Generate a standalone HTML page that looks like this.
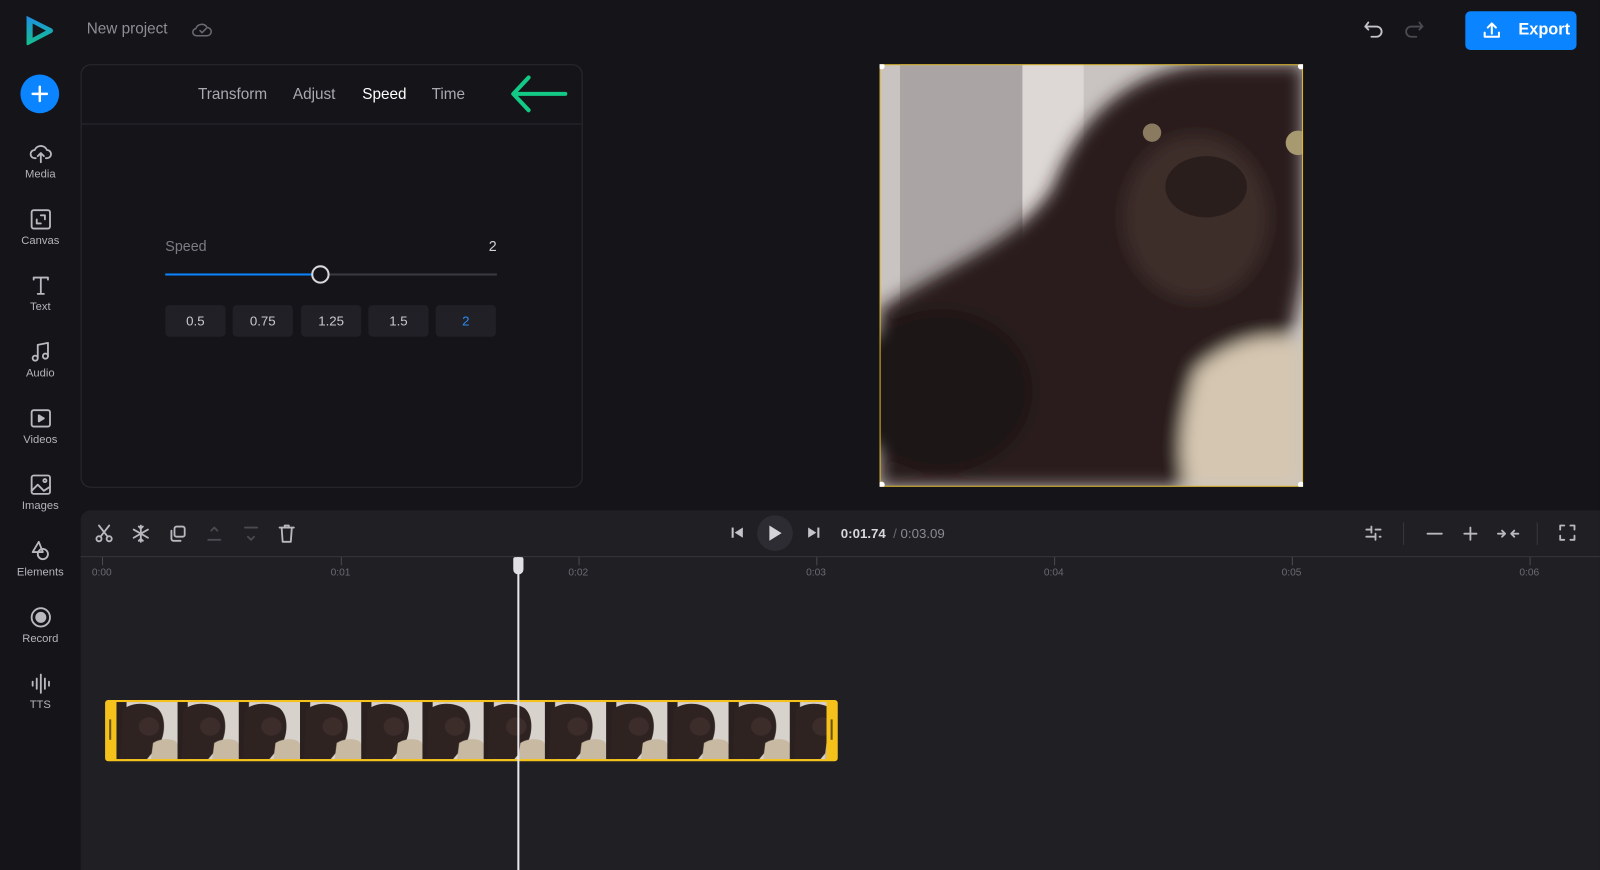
<!DOCTYPE html>
<html><head><meta charset="utf-8"><style>
*{box-sizing:border-box;margin:0;padding:0}
html,body{width:1600px;height:870px;overflow:hidden;background:#141419}
#w{position:absolute;left:0;top:0;width:1568px;height:853px;transform:scale(1.0204);transform-origin:0 0;background:#141419;font-family:"Liberation Sans",sans-serif;color:#e6e6ea}
.abs{position:absolute}
.side{left:0;width:79px;text-align:center;font-size:11px;color:#b4b4ba}
.side svg{display:block;margin:0 auto 3px}
.tab{position:absolute;top:84px;font-size:15px;color:#a9a9b0}
.btn{position:absolute;top:299px;width:59px;height:31px;background:#202026;border-radius:4px;font-size:13px;color:#c9c9cf;text-align:center;line-height:31px}
.tick{position:absolute;top:546px;width:1px;height:8px;background:#4a4a52}
.tl{position:absolute;top:556px;font-size:10px;color:#6a6a72}
svg.i{position:absolute;fill:none;stroke:#b8b8be;stroke-width:1.8;stroke-linecap:round;stroke-linejoin:round}
</style></head><body><div id="w">
<svg class="abs" style="left:24px;top:14px" width="30" height="32" viewBox="0 0 30 32"><defs><linearGradient id="lg" x1="0" y1="0" x2="0" y2="1"><stop offset="0" stop-color="#1e8fe6"/><stop offset="1" stop-color="#15c08a"/></linearGradient></defs><path d="M2 2 Q1 1 3 2 L27 14 Q29 16 27 18 L4 30 Q2 31 2 29 Z M8 9 L8 23 L21 16 Z" fill="url(#lg)" fill-rule="evenodd"/></svg>
<div class="abs" style="left:85px;top:20px;font-size:15px;color:#8e8e95">New project</div>
<svg class="i" style="left:188px;top:20px;stroke:#6a6a72;stroke-width:1.5" width="21" height="18" viewBox="0 0 21 18"><path d="M5 15 H15 A4 4 0 0 0 15 7 A6 6 0 0 0 4 8 A3.5 3.5 0 0 0 5 15Z"/><path d="M8 10 L10 12 L14 8"/></svg>
<svg class="i" style="left:1336px;top:19px;stroke:#c4c4ca" width="22" height="20" viewBox="0 0 22 20"><path d="M5 3 L2 7 L5 10"/><path d="M2 7 H13 A5 5 0 0 1 13 17 H8"/></svg>
<svg class="i" style="left:1374px;top:19px;stroke:#4a4a50" width="22" height="20" viewBox="0 0 22 20"><path d="M17 3 L20 7 L17 10"/><path d="M20 7 H9 A5 5 0 0 0 9 17 H14"/></svg>
<div class="abs" style="left:1436px;top:11px;width:109px;height:38px;background:#0a84ff;border-radius:5px;color:#fff;font-size:16px;font-weight:bold;line-height:38px;padding-left:52px">Export</div>
<svg class="i" style="left:1452px;top:20px;stroke:#fff;stroke-width:2" width="20" height="20" viewBox="0 0 20 20"><path d="M10 13 V3 M6 7 L10 3 L14 7 M3 12 V16 H17 V12"/></svg>
<div class="abs" style="left:20px;top:73px;width:38px;height:38px;border-radius:50%;background:#0a84ff"></div>
<svg class="i" style="left:29px;top:82px;stroke:#fff;stroke-width:2.4" width="20" height="20" viewBox="0 0 20 20"><path d="M10 3V17M3 10H17"/></svg>
<div class="abs side" style="top:138px"><svg class="i" style="position:static" width="24" height="24" viewBox="0 0 24 24"><path d="M7 17 H6 A4 4 0 0 1 6 9 A6.5 6.5 0 0 1 18 9 A4 4 0 0 1 18 17 H17"/><path d="M12 21V12M9 15L12 12L15 15"/></svg>Media</div>
<div class="abs side" style="top:203px"><svg class="i" style="position:static" width="24" height="24" viewBox="0 0 24 24"><rect x="3" y="3" width="18" height="18" rx="2"/><path d="M8 12V16H12M16 12V8H12"/></svg>Canvas</div>
<div class="abs side" style="top:268px"><svg class="i" style="position:static" width="24" height="24" viewBox="0 0 24 24"><path d="M5 6V4H19V6M12 4V20M9 20H15"/></svg>Text</div>
<div class="abs side" style="top:333px"><svg class="i" style="position:static" width="24" height="24" viewBox="0 0 24 24"><path d="M9 18V5L19 3V16"/><circle cx="6.5" cy="18" r="2.5"/><circle cx="16.5" cy="16" r="2.5"/></svg>Audio</div>
<div class="abs side" style="top:398px"><svg class="i" style="position:static" width="24" height="24" viewBox="0 0 24 24"><rect x="3" y="4" width="18" height="16" rx="2"/><path d="M10 9V15L15 12Z" fill="#b8b8be"/></svg>Videos</div>
<div class="abs side" style="top:463px"><svg class="i" style="position:static" width="24" height="24" viewBox="0 0 24 24"><rect x="3" y="3" width="18" height="18" rx="2"/><path d="M3 18L9 12L15 18L21 14"/><circle cx="16" cy="8" r="1.5"/></svg>Images</div>
<div class="abs side" style="top:528px"><svg class="i" style="position:static" width="24" height="24" viewBox="0 0 24 24"><path d="M10 3L4 13H14Z"/><circle cx="14" cy="15" r="5"/></svg>Elements</div>
<div class="abs side" style="top:593px"><svg class="i" style="position:static" width="24" height="24" viewBox="0 0 24 24"><circle cx="12" cy="12" r="9"/><circle cx="12" cy="12" r="4.5" fill="#b8b8be"/></svg>Record</div>
<div class="abs side" style="top:658px"><svg class="i" style="position:static" width="24" height="24" viewBox="0 0 24 24"><path d="M4 10V14M8 7V17M12 3V21M16 7V17M20 10V14"/></svg>TTS</div>
<div class="abs" style="left:79px;top:63px;width:492px;height:415px;border:1px solid #2a2a30;border-radius:10px"></div>
<div class="abs" style="left:80px;top:121px;width:490px;height:1px;background:#2a2a30"></div>
<div class="tab" style="left:194px">Transform</div>
<div class="tab" style="left:287px">Adjust</div>
<div class="tab" style="left:355px;color:#fff">Speed</div>
<div class="tab" style="left:423px">Time</div>
<svg class="i" style="left:498px;top:70px;stroke:#12c985;stroke-width:4" width="62" height="46" viewBox="0 0 62 46"><path d="M56 22H6M20 6L5 22L20 38"/></svg>
<div class="abs" style="left:162px;top:233px;font-size:14px;color:#7c7c84">Speed</div>
<div class="abs" style="left:479px;top:233px;font-size:14px;color:#d0d0d6">2</div>
<div class="abs" style="left:162px;top:268px;width:325px;height:2px;background:#3a3a40"></div>
<div class="abs" style="left:162px;top:268px;width:152px;height:2px;background:#0a84ff"></div>
<div class="abs" style="left:305px;top:260px;width:18px;height:18px;border-radius:50%;border:2px solid #d8d8dc;background:#141419"></div>
<div class="btn" style="left:162px">0.5</div>
<div class="btn" style="left:228px">0.75</div>
<div class="btn" style="left:295px">1.25</div>
<div class="btn" style="left:361px">1.5</div>
<div class="btn" style="left:427px;color:#2b8cf0">2</div>
<svg class="abs" style="left:862px;top:63px" width="415" height="414" viewBox="0 0 415 414">
<defs><filter id="bl"><feGaussianBlur stdDeviation="8"/></filter></defs>
<rect width="415" height="414" fill="#c9c4c2"/>
<rect x="20" width="120" height="300" fill="#aaa5a4"/>
<rect x="140" width="60" height="220" fill="#ddd8d6"/>
<g filter="url(#bl)">
<path d="M0 240 C80 190 140 170 170 120 C200 40 260 0 330 0 L415 0 L415 200 C400 300 380 330 330 330 L300 414 L0 414Z" fill="#2a1f1d"/>
<ellipse cx="310" cy="150" rx="70" ry="80" fill="#3d2d2b"/>
<path d="M310 300 C350 260 415 260 415 280 L415 414 L300 414 C290 370 300 330 310 300Z" fill="#d4c6b0"/>
<ellipse cx="60" cy="320" rx="90" ry="80" fill="#1d1616"/>
</g>
<ellipse cx="320" cy="120" rx="40" ry="30" fill="#2a1e1c"/>
<circle cx="267" cy="67" r="9" fill="#8a7a60"/><circle cx="410" cy="77" r="12" fill="#a89a70"/>
<path d="M0 0H415V414H0Z" fill="none" stroke="#e0b72c" stroke-width="2"/>
<circle cx="2" cy="2" r="3" fill="#fff"/><circle cx="413" cy="2" r="3" fill="#fff"/><circle cx="2" cy="412" r="3" fill="#fff"/><circle cx="413" cy="412" r="3" fill="#fff"/>
</svg>
<div class="abs" style="left:79px;top:500px;width:1489px;height:353px;background:#1f1f24;border-top-left-radius:10px"></div>
<div class="abs" style="left:79px;top:545px;width:1489px;height:1px;background:#35353c"></div>
<svg class="i" style="left:92px;top:513px" width="20" height="20" viewBox="0 0 20 20"><circle cx="5" cy="15" r="2.5"/><circle cx="15" cy="15" r="2.5"/><path d="M6.5 13L15 2M13.5 13L5 2"/></svg>
<svg class="i" style="left:128px;top:513px" width="20" height="20" viewBox="0 0 20 20"><path d="M10 2V18M3 6L17 14M3 14L17 6M8 3L10 5L12 3M8 17L10 15L12 17"/></svg>
<svg class="i" style="left:164px;top:513px" width="20" height="20" viewBox="0 0 20 20"><rect x="7" y="3" width="10" height="10" rx="2"/><path d="M4 7V15A2 2 0 0 0 6 17H13"/></svg>
<svg class="i" style="left:200px;top:513px;stroke:#4a4a50" width="20" height="20" viewBox="0 0 20 20"><path d="M7 7L10 4L13 7M4 16H16"/></svg>
<svg class="i" style="left:236px;top:513px;stroke:#4a4a50" width="20" height="20" viewBox="0 0 20 20"><path d="M7 13L10 16L13 13M4 4H16"/></svg>
<svg class="i" style="left:271px;top:513px" width="20" height="20" viewBox="0 0 20 20"><path d="M3 4H17M8 4V2H12V4M5 4L6 18H14L15 4"/></svg>
<svg class="abs" style="left:716px;top:515px" width="14" height="14" viewBox="0 0 14 14"><rect x="1" y="2" width="2" height="10" fill="#c4c4ca"/><path d="M12 2V12L4 7Z" fill="#c4c4ca"/></svg>
<div class="abs" style="left:742px;top:505px;width:35px;height:35px;border-radius:50%;background:#2c2c32"></div>
<svg class="abs" style="left:752px;top:514px" width="16" height="17" viewBox="0 0 16 17"><path d="M2 1V16L14 8.5Z" fill="#d4d4d8"/></svg>
<svg class="abs" style="left:790px;top:515px" width="14" height="14" viewBox="0 0 14 14"><rect x="11" y="2" width="2" height="10" fill="#c4c4ca"/><path d="M2 2V12L10 7Z" fill="#c4c4ca"/></svg>
<div class="abs" style="left:824px;top:515px;font-size:13px;font-weight:bold;color:#d8d8dc">0:01.74 <span style="font-weight:normal;color:#6a6a72">&nbsp;/&nbsp;</span><span style="font-weight:normal;color:#8a8a92">0:03.09</span></div>
<svg class="i" style="left:1336px;top:512px" width="20" height="20" viewBox="0 0 20 20"><path d="M3 7H8M12 7H17M8 4V10M3 14H12M16 14H17M12 11V17"/></svg>
<div class="abs" style="left:1375px;top:512px;width:1px;height:22px;background:#38383e"></div>
<svg class="i" style="left:1396px;top:513px" width="20" height="20" viewBox="0 0 20 20"><path d="M3 10H17"/></svg>
<svg class="i" style="left:1431px;top:513px" width="20" height="20" viewBox="0 0 20 20"><path d="M4 10H16M10 4V16"/></svg>
<svg class="i" style="left:1466px;top:513px" width="24" height="20" viewBox="0 0 24 20"><path d="M2 10H9M6 7L9 10L6 13M22 10H15M18 7L15 10L18 13"/></svg>
<div class="abs" style="left:1506px;top:512px;width:1px;height:22px;background:#38383e"></div>
<svg class="i" style="left:1526px;top:512px" width="20" height="20" viewBox="0 0 20 20"><path d="M3 7V3H7M13 3H17V7M17 13V17H13M7 17H3V13"/></svg>
<div class="tick" style="left:100px"></div><div class="tl" style="left:90px">0:00</div>
<div class="tick" style="left:334px"></div><div class="tl" style="left:324px">0:01</div>
<div class="tick" style="left:567px"></div><div class="tl" style="left:557px">0:02</div>
<div class="tick" style="left:800px"></div><div class="tl" style="left:790px">0:03</div>
<div class="tick" style="left:1033px"></div><div class="tl" style="left:1023px">0:04</div>
<div class="tick" style="left:1266px"></div><div class="tl" style="left:1256px">0:05</div>
<div class="tick" style="left:1499px"></div><div class="tl" style="left:1489px">0:06</div>
<div class="abs" style="left:103px;top:686px;width:718px;height:60px;background:#f5c21b;border-radius:3px"></div>
<svg class="abs" style="left:114px;top:688px" width="696" height="56" viewBox="0 0 696 56">
<defs><pattern id="fr" width="60" height="56" patternUnits="userSpaceOnUse">
<rect width="60" height="56" fill="#d8d2cc"/><rect x="0" width="10" height="56" fill="#2a2020"/>
<path d="M6 8C14 0 30 0 40 6C50 14 48 36 40 44L30 56H4Z" fill="#2e2321"/>
<ellipse cx="32" cy="24" rx="10" ry="9" fill="#3c2c2a"/>
<path d="M36 40C46 34 60 36 60 42V56H34Z" fill="#c7b9a2"/>
</pattern></defs>
<rect width="696" height="56" fill="url(#fr)"/></svg>
<div class="abs" style="left:107px;top:705px;width:2px;height:20px;background:#6a5410"></div>
<div class="abs" style="left:814px;top:705px;width:2px;height:20px;background:#6a5410"></div>
<div class="abs" style="left:507px;top:546px;width:2px;height:307px;background:#e8e8ec"></div>
<div class="abs" style="left:503px;top:546px;width:10px;height:17px;background:#e0e0e4;border-radius:2px 2px 5px 5px"></div>
</div></body></html>
